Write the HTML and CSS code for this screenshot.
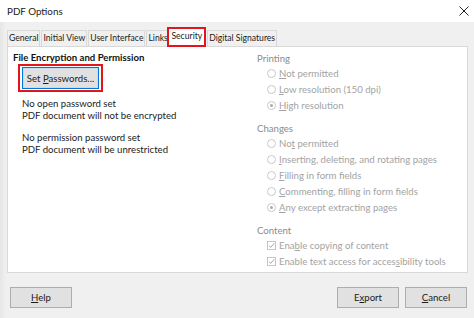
FILE: index.html
```html
<!DOCTYPE html>
<html lang="en">
  <head>
    <meta charset="UTF-8" />
    <title>PDF Options</title>
    <link rel="stylesheet" href="styles.css">
  </head>

  <body>
    <div class="dialog">
      <div class="titlebar">
        <span class="title">PDF Options</span>
        <svg class="close" width="10" height="10" viewBox="0 0 10 10">
          <path d="M0.5 0.5 L9.5 9.5 M9.5 0.5 L0.5 9.5" stroke="#222" stroke-width="1" fill="none" />
        </svg>
      </div>

      <div class="content">
        <ul class="tabs">
          <li>General</li>
          <li>Initial View</li>
          <li>User Interface</li>
          <li class="clip">Links</li>
          <li class="on">Security</li>
          <li>Digital Signatures</li>
        </ul>

        <div class="panel">
          <div class="col left">
            <h3>File Encryption and Permission</h3>
            <div class="mark">
              <button class="btn focus">Set <u>P</u>asswords...</button>
            </div>
            <p class="info">No open password set<br />PDF document will not be encrypted</p>
            <p class="info">No permission password set<br />PDF document will be unrestricted</p>
          </div>

          <div class="col right">
            <h3>Printing</h3>
            <div class="opt"><span class="radio"></span><span><u>N</u>ot permitted</span></div>
            <div class="opt"><span class="radio"></span><span><u>L</u>ow resolution (150 dpi)</span></div>
            <div class="opt"><span class="radio sel"></span><span><u>H</u>igh resolution</span></div>

            <h3 class="gap">Changes</h3>
            <div class="opt"><span class="radio"></span><span>No<u>t</u> permitted</span></div>
            <div class="opt"><span class="radio"></span><span><u>I</u>nserting, deleting, and rotating pages</span></div>
            <div class="opt"><span class="radio"></span><span><u>F</u>illing in form fields</span></div>
            <div class="opt"><span class="radio"></span><span><u>C</u>ommenting, filling in form fields</span></div>
            <div class="opt"><span class="radio sel"></span><span><u>A</u>ny except extracting pages</span></div>

            <h3 class="gap">Content</h3>
            <div class="opt">
              <svg class="check" width="9" height="9" viewBox="0 0 9 9">
                <rect x="0.5" y="0.5" width="8" height="8" fill="#fff" stroke="#c6c6c6" />
                <path d="M1.8 4.6 L3.6 6.4 L7.2 2.4" stroke="#a6a6a6" stroke-width="1" fill="none" />
              </svg>
              <span>Ena<u>b</u>le copying of content</span>
            </div>
            <div class="opt">
              <svg class="check" width="9" height="9" viewBox="0 0 9 9">
                <rect x="0.5" y="0.5" width="8" height="8" fill="#fff" stroke="#c6c6c6" />
                <path d="M1.8 4.6 L3.6 6.4 L7.2 2.4" stroke="#a6a6a6" stroke-width="1" fill="none" />
              </svg>
              <span>Enable text access for acces<u>s</u>ibility tools</span>
            </div>
          </div>
        </div>

        <div class="footer">
          <button class="btn"><u>H</u>elp</button>
          <div class="spacer"></div>
          <button class="btn">E<u>x</u>port</button>
          <button class="btn"><u>C</u>ancel</button>
        </div>
      </div>
    </div>
  </body>
</html>
```

FILE: styles.css
```css
* {
  margin: 0;
  padding: 0;
  box-sizing: border-box;
}

body {
  width: 474px;
  height: 318px;
  overflow: hidden;
  font-family: Lato, "Noto Sans", sans-serif;
  font-size: 9.6px;
  color: #1b1b1b;
  background-color: #f0f0f0;
}

u {
  text-decoration-thickness: 1px;
  text-underline-offset: 1px;
}

.dialog {
  display: flex;
  flex-direction: column;
  height: 318px;
}

.titlebar {
  display: flex;
  align-items: center;
  justify-content: space-between;
  height: 22px;
  padding: 0 5px 0 7px;
  background-color: #fff;
  font-size: 9.8px;
}

.content {
  flex: 1;
  padding: 6px 6px 0 7px;
  background: linear-gradient(to right, #e6e6e6, #f0f0f0 6px);
}

/* tab strip */
.tabs {
  display: flex;
  align-items: flex-end;
  height: 18px;
  list-style-type: none;
  font-size: 8.6px;
}

.tabs li {
  height: 16px;
  padding: 0 1px;
  margin-right: 1px;
  border: 1px solid #d9d9d9;
  border-bottom: none;
  background-color: #f0f0f0;
  line-height: 15px;
  white-space: nowrap;
}

.tabs li.clip {
  overflow: hidden;
  width: 22px;
  margin-right: -1px;
  padding-right: 0;
}

.tabs li.on {
  position: relative;
  z-index: 1;
  height: 20px;
  margin-bottom: -1px;
  padding: 0 2px;
  border: 2px solid #e3141b;
  background-color: #fff;
  line-height: 15px;
}

/* main page */
.panel {
  display: flex;
  width: 461px;
  height: 227px;
  border: 1px solid #d9d9d9;
  background-color: #fff;
}

.col h3 {
  height: 13px;
  font-size: 9.6px;
  line-height: 13px;
}

.left {
  width: 249px;
  padding: 5px 0 0 5px;
}

.left h3 {
  height: 12px;
  line-height: 12px;
  font-weight: bold;
  color: #111;
}

.mark {
  display: inline-block;
  margin: 0 0 0 5px;
  padding: 1px 2px;
  border: 2px solid #e3141b;
}

.info {
  margin: 6px 0 0 9px;
  line-height: 12px;
}

.info + .info {
  margin-top: 10px;
}

.right {
  padding-top: 5px;
  color: #a3a3a3;
}

.right h3 {
  font-weight: normal;
  color: #8c8c8c;
}

.right h3.gap {
  margin-top: 9px;
}

.opt {
  display: flex;
  align-items: center;
  height: 16px;
  padding-left: 10px;
  white-space: nowrap;
}

.radio {
  position: relative;
  width: 9px;
  height: 9px;
  margin-right: 3px;
  border: 1px solid #c9c9c9;
  border-radius: 50%;
}

.radio.sel:after {
  content: "";
  position: absolute;
  left: 2px;
  top: 2px;
  width: 3px;
  height: 3px;
  border-radius: 50%;
  background-color: #a9a9a9;
}

.check {
  margin-right: 3px;
}

/* buttons */
.btn {
  width: 62px;
  height: 21px;
  border: 1px solid #adadad;
  background-color: #e1e1e1;
  font-family: inherit;
  font-size: 9.6px;
  color: #1b1b1b;
  white-space: nowrap;
}

.btn.focus {
  display: block;
  width: 77px;
  height: 22px;
  border: 1px solid #0078d7;
  box-shadow: inset 0 0 0 1px #c9dcef;
}

.footer {
  display: flex;
  gap: 6px;
  padding: 14px 1px 0 3px;
}

.spacer {
  flex: 1;
}
```
